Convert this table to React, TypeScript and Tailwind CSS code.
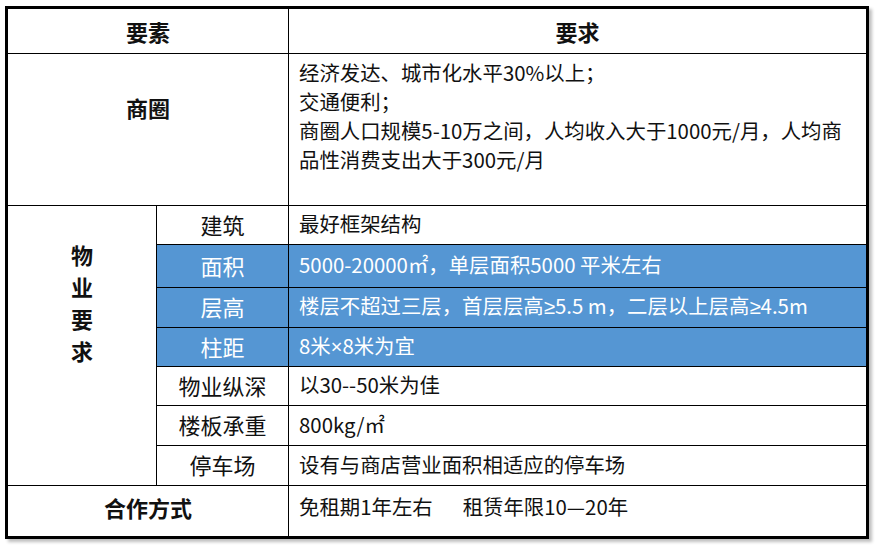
const font = { fontFamily: '"Noto Sans CJK SC", "Microsoft YaHei", sans-serif' }

type Row = { label: string; text: React.ReactNode; blue?: boolean }

// narrow symbols, the CJK font draws these full width
const Sym = ({ c }: { c: string }) => <span style={{ fontFamily: '"Noto Sans", sans-serif' }}>{c}</span>

const propertyRows: Row[] = [
  { label: "建筑", text: "最好框架结构" },
  { label: "面积", text: "5000-20000㎡，单层面积5000 平米左右", blue: true },
  {
    label: "层高",
    text: (
      <>
        楼层不超过三层，首层层高<Sym c="≥" />5.5 m，二层以上层高<Sym c="≥" />4.5m
      </>
    ),
    blue: true,
  },
  {
    label: "柱距",
    text: (
      <>
        8米<Sym c="×" />8米为宜
      </>
    ),
    blue: true,
  },
  { label: "物业纵深", text: "以30--50米为佳" },
  { label: "楼板承重", text: "800kg/㎡" },
  { label: "停车场", text: "设有与商店营业面积相适应的停车场" },
]

export default function App() {
  return (
    <div className="w-[876px] h-[545px] bg-white text-[#111]" style={font}>
      <div className="ml-[5px] pt-[6px]">
        <div className="w-[864px] border-[3px] border-black bg-white shadow-[3px_3px_3px_rgba(0,0,0,0.25)]">
          <div className="grid grid-cols-[149px_132px_1fr] grid-rows-[45px_152px_39px_43px_40px_39px_39px_40px_40px_50px]">
            {/* header */}
            <div className="col-span-2 flex items-center justify-center border-r border-b border-black text-[22px] font-bold">
              要素
            </div>
            <div className="flex items-center justify-center border-b border-black text-[22px] font-bold">
              要求
            </div>

            {/* 商圈 */}
            <div className="col-span-2 flex justify-center border-r border-b border-black pt-[37px] text-[22px] font-bold">
              商圈
            </div>
            <div className="border-b border-black pl-[10px] pt-[4px] text-[20.4px] leading-[29px]">
              <div className="whitespace-nowrap">经济发达、城市化水平30%以上；</div>
              <div className="whitespace-nowrap">交通便利；</div>
              <div className="whitespace-nowrap">商圈人口规模5-10万之间，人均收入大于1000元/月，人均商</div>
              <div className="whitespace-nowrap">品性消费支出大于300元/月</div>
            </div>

            {/* 物业要求 */}
            <div className="row-span-7 flex flex-col items-center border-r border-b border-black pt-[32px] text-[22px] font-bold leading-[32px]">
              <span>物</span>
              <span>业</span>
              <span>要</span>
              <span>求</span>
            </div>
            {propertyRows.map(r => (
              <PropertyRow key={r.label} row={r} />
            ))}

            {/* 合作方式 */}
            <div className="col-span-2 flex justify-center border-r border-black pt-[5px] text-[22px] font-bold">
              合作方式
            </div>
            <div className="flex whitespace-nowrap pl-[10px] pt-[5px] text-[20.4px]">
              <span>免租期1年左右</span>
              <span className="ml-[30px]">租赁年限10—20年</span>
            </div>
          </div>
        </div>
      </div>
    </div>
  )
}

function PropertyRow({ row }: { row: Row }) {
  const bg = row.blue ? "bg-[#5596d3] text-white" : ""
  return (
    <>
      <div className={`flex items-center justify-center border-r border-b border-black pb-[2px] text-[22px] ${bg}`}>
        {row.label}
      </div>
      <div className={`flex items-center whitespace-nowrap border-b border-black pl-[10px] pb-[3px] text-[20.4px] ${bg}`}>
        <span>{row.text}</span>
      </div>
    </>
  )
}
